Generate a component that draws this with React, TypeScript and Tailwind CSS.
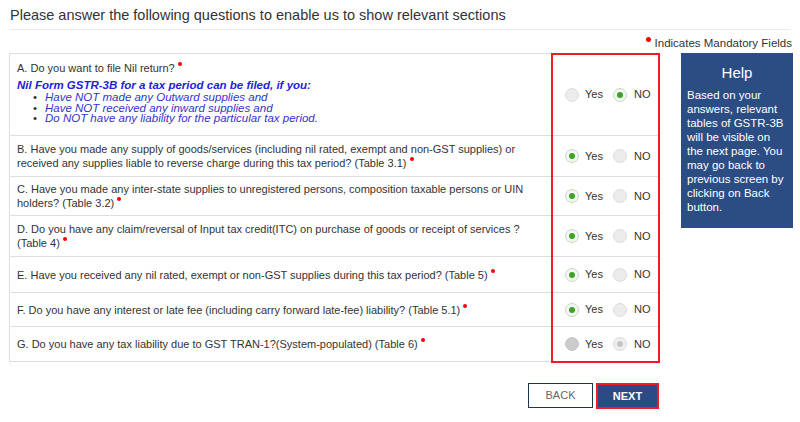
import clsx from 'clsx'

interface Question {
  id: string
  lines: string[]
  height: string
  answer: 'yes' | 'no'
  disabled?: boolean
}

const questions: Question[] = [
  {
    id: 'B',
    lines: [
      'B. Have you made any supply of goods/services (including nil rated, exempt and non-GST supplies) or',
      'received any supplies liable to reverse charge during this tax period? (Table 3.1)',
    ],
    height: 'h-[41px]',
    answer: 'yes',
  },
  {
    id: 'C',
    lines: [
      'C. Have you made any inter-state supplies to unregistered persons, composition taxable persons or UIN',
      'holders? (Table 3.2)',
    ],
    height: 'h-[39px]',
    answer: 'yes',
  },
  {
    id: 'D',
    lines: [
      'D. Do you have any claim/reversal of Input tax credit(ITC) on purchase of goods or receipt of services ?',
      '(Table 4)',
    ],
    height: 'h-[41px]',
    answer: 'yes',
  },
  {
    id: 'E',
    lines: ['E. Have you received any nil rated, exempt or non-GST supplies during this tax period? (Table 5)'],
    height: 'h-[36px]',
    answer: 'yes',
  },
  {
    id: 'F',
    lines: ['F. Do you have any interest or late fee (including carry forward late-fee) liability? (Table 5.1)'],
    height: 'h-[34px]',
    answer: 'yes',
  },
  {
    id: 'G',
    lines: ['G. Do you have any tax liability due to GST TRAN-1?(System-populated) (Table 6)'],
    height: 'h-[35px]',
    answer: 'no',
    disabled: true,
  },
]

const helpLines = [
  'Based on your',
  'answers, relevant',
  'tables of GSTR-3B',
  'will be visible on',
  'the next page. You',
  'may go back to',
  'previous screen by',
  'clicking on Back',
  'button.',
]

const Mandatory = () => (
  <span className="ml-[3px] inline-block size-[4px] rounded-full bg-[#ff0000] align-[6px]" />
)

const Radio = ({ checked, disabled }: { checked: boolean, disabled?: boolean }) => (
  <span
    className={clsx(
      'flex size-[14px] shrink-0 items-center justify-center rounded-full border',
      checked && !disabled && 'border-[#c3dfba] bg-[#f5f5f5]',
      !checked && !disabled && 'border-[#dedede] bg-[#ececec]',
      checked && disabled && 'border-[#dadada] bg-[#f0f0f0]',
      !checked && disabled && 'border-[#c9c9c9] bg-[#cbcbcb]',
    )}
  >
    {checked && (
      <span className={clsx('size-[6px] rounded-full', disabled ? 'bg-[#c6c6c6]' : 'bg-[#3ea22a]')} />
    )}
  </span>
)

const Choice = ({ answer, disabled }: { answer: 'yes' | 'no', disabled?: boolean }) => (
  <div className="flex w-[107px] shrink-0 items-center pl-[13px] text-[11px] text-[#333]">
    <Radio checked={answer === 'yes'} disabled={disabled} />
    <span className="ml-[6px]">Yes</span>
    <span className="ml-[10px]">
      <Radio checked={answer === 'no'} disabled={disabled} />
    </span>
    <span className="ml-[7px]">NO</span>
  </div>
)

export default function App() {
  return (
    <div className="h-[422px] w-[800px] overflow-hidden bg-white font-['Liberation_Sans',Arial,sans-serif] text-[#333]">
      <div className="mx-[9px] h-[30px] border-b border-[#ececec] pt-[6px] pl-[1px] text-[14.5px] leading-[18px] text-[#333]">
        Please answer the following questions to enable us to show relevant sections
      </div>

      <div className="flex h-[23px] items-start justify-end pt-[6px] pr-[8px] text-[11.5px] leading-[14px]">
        <span className="mr-[4px] mt-[1px] size-[5px] rounded-full bg-[#ff0000]" />
        Indicates Mandatory Fields
      </div>

      <div className="flex gap-[21px] pr-[7px] pl-[9px]">
        <div className="w-[651px] shrink-0">
          <div className="relative border border-b-0 border-[#dedede]">
            {/* Question A */}
            <div className="flex h-[82px] border-b border-[#dedede]">
              <div className="flex-1 pt-[7px] pl-[7px] text-[11px] leading-[14px]">
                <div>
                  A. Do you want to file Nil return?
                  <Mandatory />
                </div>
                <div className="mt-[4px] text-[11.5px] leading-[13px] font-bold italic text-[#2222dd]">
                  Nil Form GSTR-3B for a tax period can be filed, if you:
                </div>
                <ul className="text-[11.5px] leading-[10.5px] italic text-[#3333cc]">
                  {[
                    'Have NOT made any Outward supplies and',
                    'Have NOT received any inward supplies and',
                    'Do NOT have any liability for the particular tax period.',
                  ].map(item => (
                    <li key={item} className="flex items-center">
                      <span className="ml-[16px] w-[12px] not-italic text-[#333]">•</span>
                      {item}
                    </li>
                  ))}
                </ul>
              </div>
              <Choice answer="no" />
            </div>

            {questions.map(q => (
              <div key={q.id} className={clsx('flex border-b border-[#dedede]', q.height)}>
                <div className="flex flex-1 flex-col justify-center pl-[7px] text-[11px] leading-[14px]">
                  {q.lines.map((line, i) => (
                    <div key={line}>
                      {line}
                      {i === q.lines.length - 1 && <Mandatory />}
                    </div>
                  ))}
                </div>
                <Choice answer={q.answer} disabled={q.disabled} />
              </div>
            ))}

            {/* highlight round the answer column */}
            <div className="pointer-events-none absolute -top-px -right-px -bottom-px w-[109px] border-2 border-[#ee1c25]" />
          </div>

          <div className="mt-[21px] flex justify-end gap-[3px] pr-[1px]">
            <button
              type="button"
              className="h-[25px] w-[65px] border border-[#1d3552] bg-white text-[11px] text-[#666]"
            >
              BACK
            </button>
            <button
              type="button"
              className="h-[26px] w-[63px] border-2 border-[#ee1c25] bg-[#2c4a84] text-[11px] font-bold text-white"
            >
              NEXT
            </button>
          </div>
        </div>

        <div className="h-[175px] w-[112px] shrink-0 bg-[#2c4c84] px-[6px] pt-[11px] text-white">
          <div className="text-center text-[15px] leading-[18px]">Help</div>
          <div className="mt-[6px] text-[11.5px] leading-[14px]">
            {helpLines.map(line => (
              <div key={line}>{line}</div>
            ))}
          </div>
        </div>
      </div>
    </div>
  )
}
